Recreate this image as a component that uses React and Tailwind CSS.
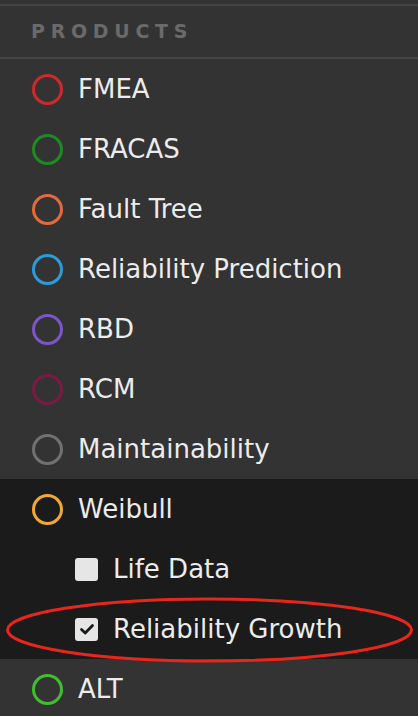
import React from 'react';

const products = [
  { name: 'FMEA', color: '#d0292c' },
  { name: 'FRACAS', color: '#1f8a25' },
  { name: 'Fault Tree', color: '#e46a3c' },
  { name: 'Reliability Prediction', color: '#2b9cd8' },
  { name: 'RBD', color: '#7b56c6' },
  { name: 'RCM', color: '#7a1b46' },
  { name: 'Maintainability', color: '#717171' },
];

const font = { fontFamily: '"DejaVu Sans", Verdana, sans-serif' };

const Ring = ({ color }) => (
  <span
    className="block w-[31px] h-[31px] rounded-full border-[3px] shrink-0"
    style={{ borderColor: color }}
  />
);

const ProductRow = ({ name, color }) => (
  <div className="h-[60px] flex items-center pl-[32px] gap-[15px]">
    <Ring color={color} />
    <span className="text-[26px] text-[#ececec] leading-none">{name}</span>
  </div>
);

const CheckRow = ({ label, checked }) => (
  <div className="h-[60px] flex items-center pl-[75px] gap-[15px]">
    <span className="w-[23px] h-[23px] rounded-[3px] bg-[#e6e6e6] flex items-center justify-center shrink-0">
      {checked && (
        <svg width="16" height="16" viewBox="0 0 16 16">
          <path d="M2.5 8.5 L6.2 12 L13.5 4.5" fill="none" stroke="#1a1a1a" strokeWidth="2.8" strokeLinecap="round" strokeLinejoin="round" />
        </svg>
      )}
    </span>
    <span className="text-[26px] text-[#ececec] leading-none">{label}</span>
  </div>
);

export default function App() {
  return (
    <div className="w-[418px] h-[716px] overflow-hidden bg-[#333333] relative" style={font}>
      <div className="h-[4px]" />
      <div className="border-t-2 border-b-2 border-[#444444] h-[55px] flex items-center pl-[31px]">
        <span className="text-[19px] font-bold tracking-[0.3em] text-[#6a6a6a] leading-none">PRODUCTS</span>
      </div>
      {products.map((p) => (
        <ProductRow key={p.name} {...p} />
      ))}
      <div className="bg-[#1b1b1b] relative">
        <ProductRow name="Weibull" color="#f2a933" />
        <CheckRow label="Life Data" />
        <CheckRow label="Reliability Growth" checked />
        <svg className="absolute left-0 top-[118px] pointer-events-none" width="418" height="70" viewBox="0 0 418 70">
          <ellipse cx="209.5" cy="33" rx="202" ry="31" fill="none" stroke="#e8261c" strokeWidth="3" />
        </svg>
      </div>
      <ProductRow name="ALT" color="#3fbe2e" />
    </div>
  );
}
